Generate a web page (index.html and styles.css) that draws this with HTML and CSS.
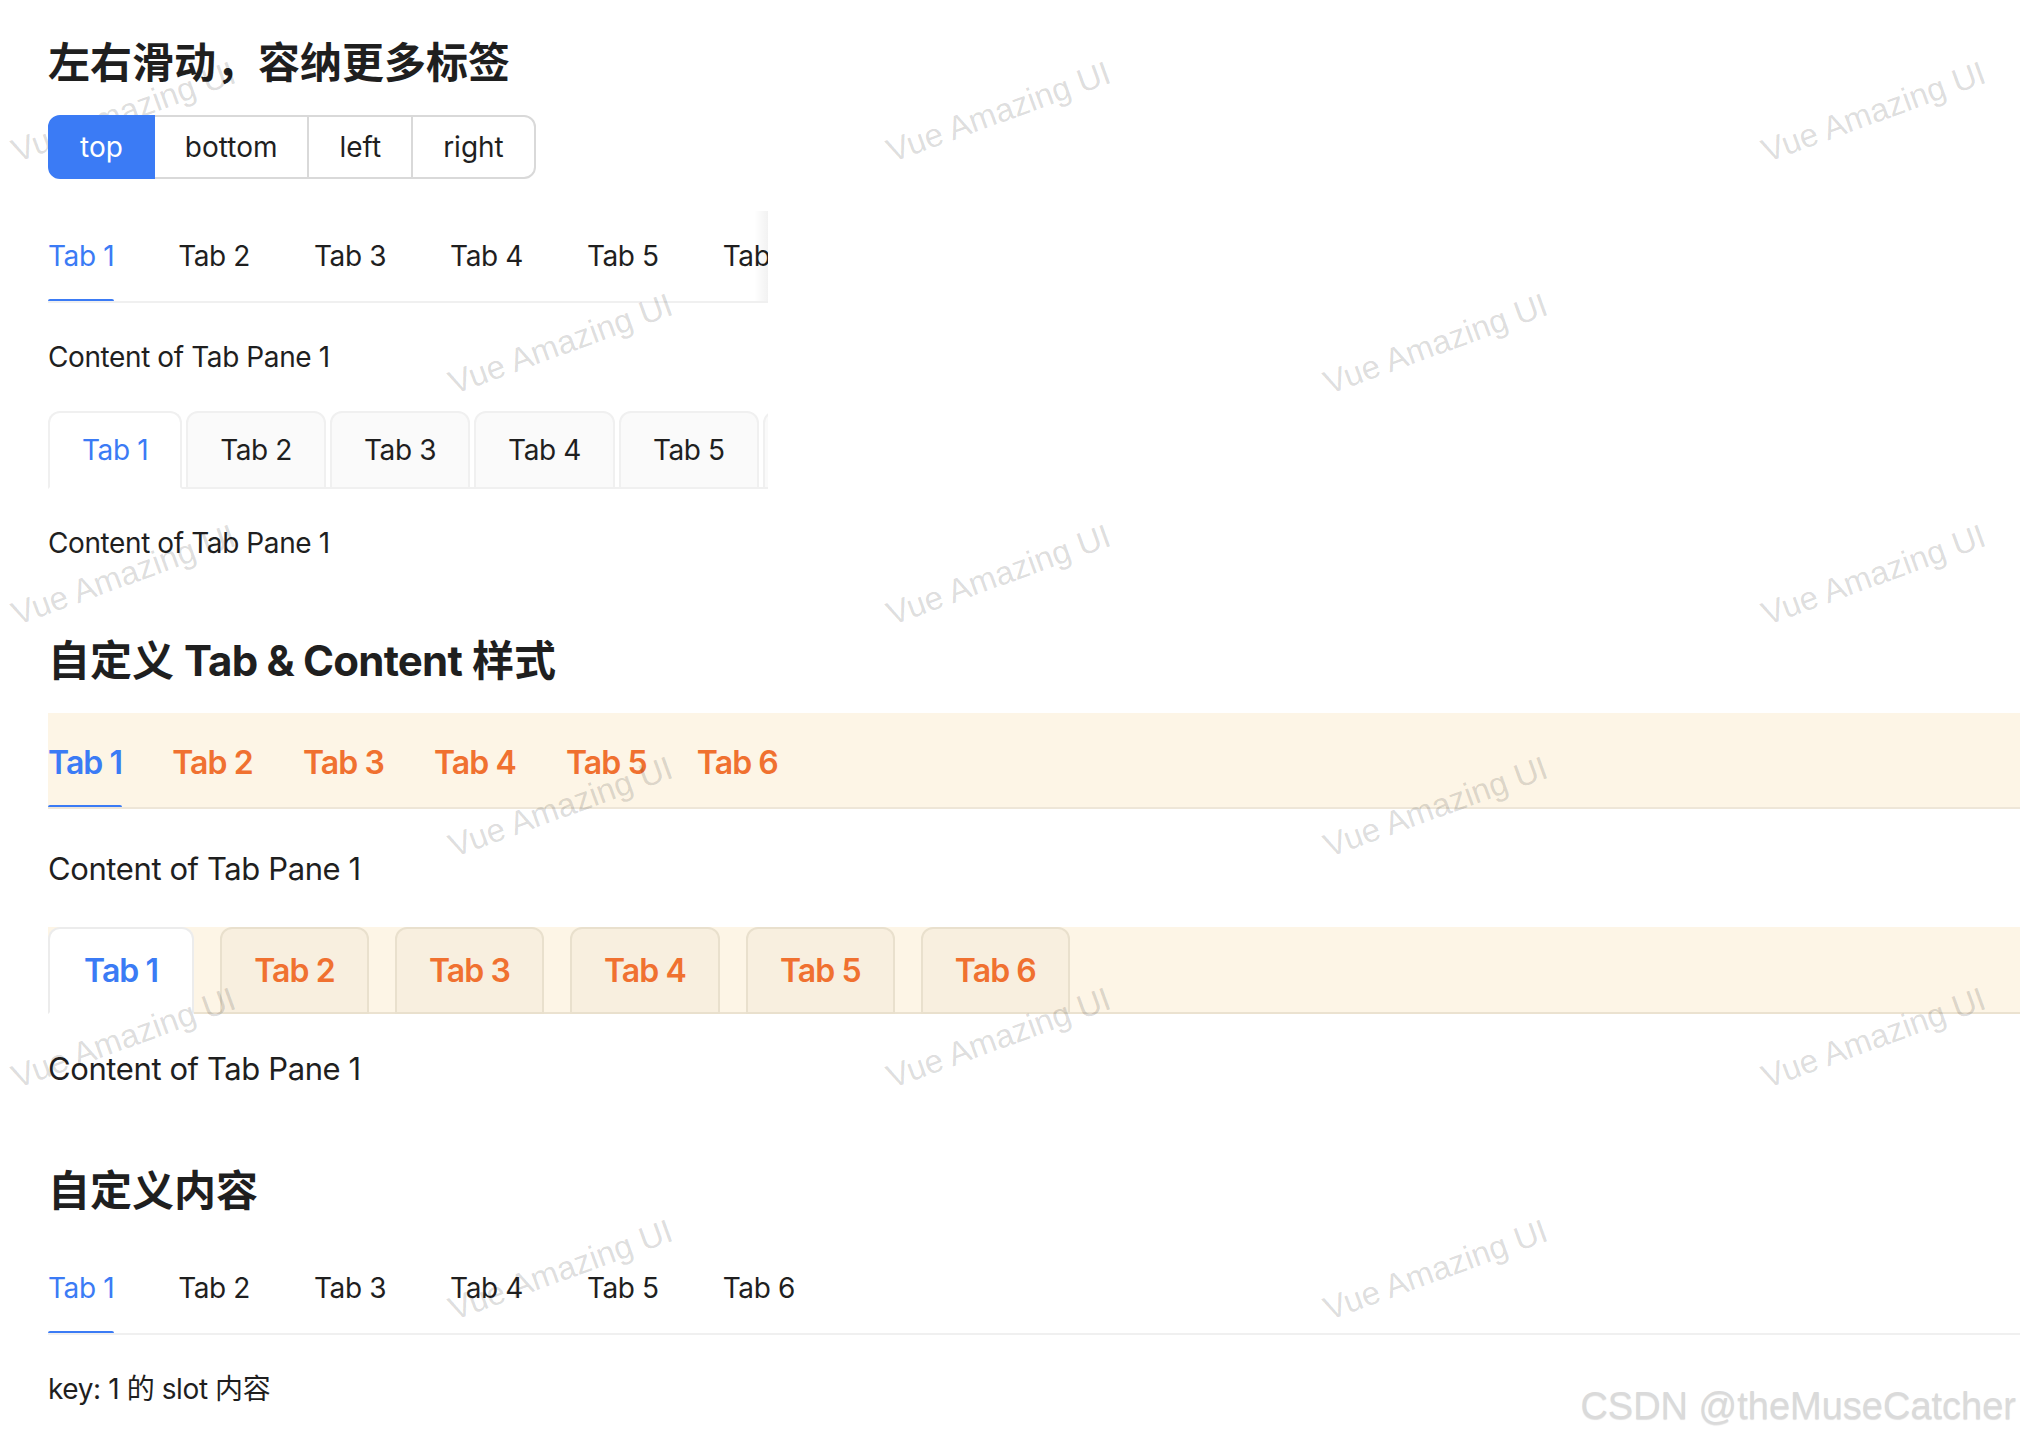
FILE: index.html
```html
<!DOCTYPE html>
<html lang="zh-CN">
<head>
<meta charset="utf-8">
<title>Tabs</title>
<link rel="stylesheet" href="styles.css">
</head>
<body>
<div class="page">
  <section class="demo">
    <h2 class="title">左右滑动，容纳更多标签</h2>
    <div class="seg">
      <span class="seg-btn active">top</span>
      <span class="seg-btn">bottom</span>
      <span class="seg-btn">left</span>
      <span class="seg-btn">right</span>
    </div>
    <div class="tabs narrow">
      <div class="nav-wrap line shadow">
        <div class="nav">
          <div class="tab active">Tab 1</div>
          <div class="tab">Tab 2</div>
          <div class="tab">Tab 3</div>
          <div class="tab">Tab 4</div>
          <div class="tab">Tab 5</div>
          <div class="tab">Tab 6</div>
          <div class="tab">Tab 7</div>
          <div class="tab">Tab 8</div>
          <div class="tab">Tab 9</div>
          <div class="tab">Tab 10</div>
        </div>
      </div>
      <div class="pane">Content of Tab Pane 1</div>
    </div>
    <div class="tabs narrow card">
      <div class="nav-wrap">
        <div class="nav">
          <div class="tab active">Tab 1</div>
          <div class="tab">Tab 2</div>
          <div class="tab">Tab 3</div>
          <div class="tab">Tab 4</div>
          <div class="tab">Tab 5</div>
          <div class="tab">Tab 6</div>
          <div class="tab">Tab 7</div>
          <div class="tab">Tab 8</div>
          <div class="tab">Tab 9</div>
          <div class="tab">Tab 10</div>
        </div>
      </div>
      <div class="pane">Content of Tab Pane 1</div>
    </div>
  </section>

  <section class="demo">
    <h2 class="title">自定义 <span class="latin">Tab &amp; Content</span> 样式</h2>
    <div class="tabs custom">
      <div class="nav-wrap line">
        <div class="nav">
          <div class="tab active">Tab 1</div>
          <div class="tab">Tab 2</div>
          <div class="tab">Tab 3</div>
          <div class="tab">Tab 4</div>
          <div class="tab">Tab 5</div>
          <div class="tab">Tab 6</div>
        </div>
      </div>
      <div class="pane">Content of Tab Pane 1</div>
    </div>
    <div class="tabs custom card">
      <div class="nav-wrap">
        <div class="nav">
          <div class="tab active">Tab 1</div>
          <div class="tab">Tab 2</div>
          <div class="tab">Tab 3</div>
          <div class="tab">Tab 4</div>
          <div class="tab">Tab 5</div>
          <div class="tab">Tab 6</div>
        </div>
      </div>
      <div class="pane">Content of Tab Pane 1</div>
    </div>
  </section>

  <section class="demo">
    <h2 class="title">自定义内容</h2>
    <div class="tabs">
      <div class="nav-wrap line">
        <div class="nav">
          <div class="tab active">Tab 1</div>
          <div class="tab">Tab 2</div>
          <div class="tab">Tab 3</div>
          <div class="tab">Tab 4</div>
          <div class="tab">Tab 5</div>
          <div class="tab">Tab 6</div>
        </div>
      </div>
      <div class="pane">key: 1 的 slot 内容</div>
    </div>
  </section>
</div>

<div class="watermark" aria-hidden="true">
  <div class="wm-row even"><span>Vue Amazing UI</span><span>Vue Amazing UI</span><span>Vue Amazing UI</span></div>
  <div class="wm-row odd"><span>Vue Amazing UI</span><span>Vue Amazing UI</span><span>Vue Amazing UI</span></div>
  <div class="wm-row even"><span>Vue Amazing UI</span><span>Vue Amazing UI</span><span>Vue Amazing UI</span></div>
  <div class="wm-row odd"><span>Vue Amazing UI</span><span>Vue Amazing UI</span><span>Vue Amazing UI</span></div>
  <div class="wm-row even"><span>Vue Amazing UI</span><span>Vue Amazing UI</span><span>Vue Amazing UI</span></div>
  <div class="wm-row odd"><span>Vue Amazing UI</span><span>Vue Amazing UI</span><span>Vue Amazing UI</span></div>
</div>

<div class="csdn">CSDN @theMuseCatcher</div>
</body>
</html>
```

FILE: styles.css
```css
:root {
  --blue: #3b7bf5;
  --orange: #f07130;
  --text: #1f1f1f;
  --line: #f0f0f0;
}

* { box-sizing: border-box; }

html, body {
  margin: 0;
  padding: 0;
  width: 2020px;
  height: 1440px;
  overflow: hidden;
  background: #fff;
}

body {
  position: relative;
  font-family: Inter, "Noto Sans CJK SC", sans-serif;
  color: var(--text);
  font-size: 28px;
  letter-spacing: -0.4px;
}

.page {
  padding: 35px 0 0 48px;
}

.demo + .demo {
  margin-top: 68px;
}

.title {
  height: 56px;
  margin: 0 0 24px;
  font-size: 42px;
  line-height: 56px;
  font-weight: 700;
  color: #1f1f1f;
  letter-spacing: 0;
}

.title .latin {
  letter-spacing: -0.8px;
}

/* segmented radio buttons */
.seg {
  display: flex;
  width: max-content;
}

.seg-btn {
  height: 64px;
  line-height: 60px;
  padding: 0 30px;
  border: 2px solid #d9d9d9;
  margin-left: -2px;
  font-size: 28px;
  letter-spacing: 0;
  color: var(--text);
  background: #fff;
}

.seg-btn:first-child {
  margin-left: 0;
  border-radius: 12px 0 0 12px;
}

.seg-btn:last-child {
  border-radius: 0 12px 12px 0;
}

.seg-btn.active {
  background: var(--blue);
  border-color: var(--blue);
  color: #fff;
  position: relative;
  z-index: 1;
}

/* tabs */
.tabs {
  margin-top: 32px;
}

.title + .tabs {
  margin-top: 24px;
}

.tabs.narrow {
  width: 720px;
}

.nav-wrap {
  position: relative;
  overflow: hidden;
}

.nav-wrap.line {
  border-bottom: 2px solid var(--line);
}

.nav-wrap.shadow::after {
  content: "";
  position: absolute;
  top: 0;
  right: 0;
  bottom: 0;
  width: 14px;
  background: linear-gradient(to left, rgba(0, 0, 0, 0.05), rgba(0, 0, 0, 0));
}

.nav {
  display: flex;
  gap: 64px;
  width: max-content;
}

.tab {
  position: relative;
  height: 90px;
  padding: 24px 0;
  line-height: 42px;
  font-size: 28px;
  white-space: nowrap;
  color: var(--text);
}

.tab.active {
  color: var(--blue);
}

.nav-wrap.line .tab.active::after {
  content: "";
  position: absolute;
  left: 0;
  right: 0;
  bottom: -2px;
  height: 4px;
  border-radius: 2px;
  background: var(--blue);
}

.pane {
  height: 44px;
  margin-top: 32px;
  line-height: 44px;
  font-size: 28px;
}

/* card tabs */
.card .nav-wrap {
  background: linear-gradient(var(--line), var(--line)) left bottom / 100% 2px no-repeat;
}

.card .nav {
  gap: 4px;
}

.card .tab {
  height: 78px;
  padding: 16px 32px;
  border: 2px solid var(--line);
  border-radius: 12px 12px 0 0;
  background: #fafafa;
}

.card .tab.active {
  background: #fff;
  border-bottom-color: #fff;
}

/* custom style */
.custom .nav-wrap.line {
  background: #fdf5e6;
  border-bottom-color: #eee6d8;
}

.custom .nav {
  gap: 50px;
}

.custom .tab {
  height: 94px;
  padding: 27px 0 21px;
  line-height: 46px;
  font-size: 32px;
  font-weight: 600;
  letter-spacing: -0.9px;
  color: var(--orange);
}

.custom .tab.active {
  color: var(--blue);
}

.custom .pane {
  height: 52px;
  margin-top: 34px;
  font-size: 31px;
  line-height: 52px;
  letter-spacing: -0.4px;
}

.custom.card .pane {
  margin-top: 29px;
}

.custom.card .nav-wrap {
  background:
    linear-gradient(#ebe2d0, #ebe2d0) left bottom / 100% 2px no-repeat,
    #fdf5e6;
}

.custom.card .nav {
  gap: 26px;
}

.custom.card .tab {
  height: 87px;
  padding: 18px 32px 17px;
  line-height: 48px;
  border: 2px solid #e9e0cd;
  border-radius: 12px 12px 0 0;
  background: #f8efdf;
  color: var(--orange);
}

.custom.card .tab.active {
  padding: 18px 34px 17px;
  background: #fff;
  border-color: #ececec;
  border-bottom-color: #fff;
  color: var(--blue);
}

/* watermark overlay */
.watermark {
  position: absolute;
  top: -4px;
  left: 0;
  width: 2020px;
  height: 1444px;
  overflow: hidden;
  pointer-events: none;
  display: flex;
  flex-direction: column;
}

.wm-row {
  display: flex;
  height: 231.5px;
  flex: none;
}

.wm-row.even { margin-left: -314px; }
.wm-row.odd { margin-left: 123px; }

.wm-row span {
  flex: 0 0 875px;
  display: flex;
  align-items: center;
  justify-content: center;
  font-family: "Liberation Sans", Arial, sans-serif;
  font-size: 33px;
  letter-spacing: 0;
  color: rgba(0, 0, 0, 0.14);
  transform: rotate(-20deg);
  white-space: nowrap;
}

/* corner credit */
.csdn {
  position: absolute;
  right: 4px;
  bottom: 14px;
  font-family: "Liberation Sans", Arial, sans-serif;
  font-size: 38px;
  line-height: 40px;
  letter-spacing: 0;
  color: #dadada;
  text-shadow: 0 1px 1px rgba(0, 0, 0, 0.12);
  white-space: nowrap;
}
```
